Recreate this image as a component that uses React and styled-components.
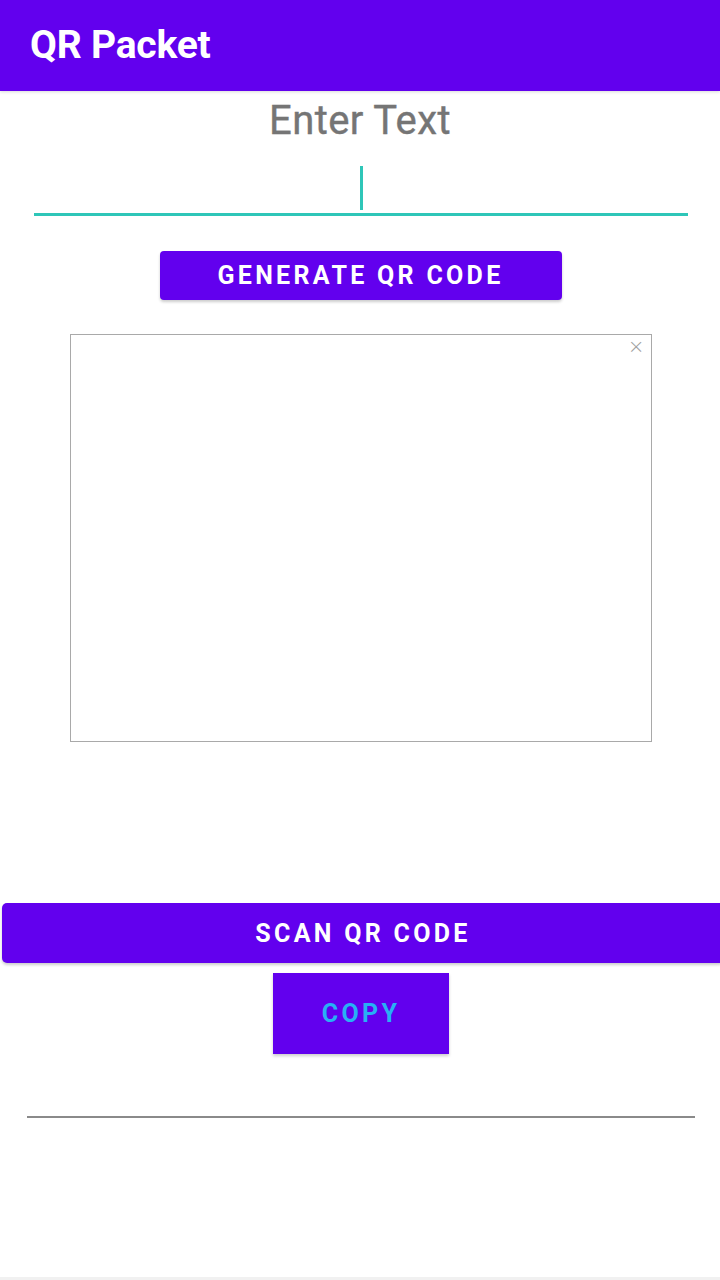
import React from 'react'
import styled, { createGlobalStyle } from 'styled-components'

const Global = createGlobalStyle`
	html, body {
		margin: 0;
		padding: 0;
		background: #fff;
	}
	body {
		font-family: Roboto, 'Noto Sans', sans-serif;
	}
`

const App = () => {
	return (
		<>
			<Global />
			<Screen>
				<AppBar>
					<Title>QR Packet</Title>
				</AppBar>
				<Label>Enter Text</Label>
				<Field>
					<Cursor />
				</Field>
				<GenerateButton>Generate QR Code</GenerateButton>
				<QrFrame>
					<CloseMark>×</CloseMark>
				</QrFrame>
				<ScanButton>Scan QR Code</ScanButton>
				<CopyButton>Copy</CopyButton>
				<Divider />
				<Spacer />
				<NavStrip />
			</Screen>
		</>
	)
}

const Screen = styled.div`
	width: 720px;
	height: 1280px;
	display: flex;
	flex-direction: column;
	overflow: hidden;
	background: #fff;
`
const AppBar = styled.header`
	height: 91px;
	flex-shrink: 0;
	display: flex;
	align-items: center;
	padding: 0 0 0 30px;
	background: #6200ee;
	box-shadow: 0 1px 3px rgba(0, 0, 0, 0.15);
`
const Title = styled.h1`
	margin: 0 0 1px;
	color: #fff;
	font-size: 39px;
	font-weight: 700;
	letter-spacing: -0.2px;
`
const Label = styled.div`
	margin-top: 6px;
	line-height: 48px;
	text-align: center;
	font-size: 40px;
	letter-spacing: 0.4px;
	color: #757575;
	-webkit-text-stroke: 0.4px #757575;
`
const Field = styled.div`
	margin: 21px 32px 0 34px;
	height: 47px;
	display: flex;
	justify-content: center;
	border-bottom: 3px solid #2ec6b8;
`
const Cursor = styled.span`
	width: 3px;
	height: 44px;
	background: #2ec6b8;
`
const Button = styled.button`
	border: none;
	background: #6200ee;
	color: #fff;
	font-family: Roboto, 'Noto Sans', sans-serif;
	font-weight: 700;
	font-size: 25px;
	letter-spacing: 3.3px;
	text-transform: uppercase;
	cursor: pointer;
	box-shadow: 0 2px 3px rgba(0, 0, 0, 0.2);
`
const GenerateButton = styled(Button)`
	align-self: center;
	margin: 35px 0 0 1px;
	width: 402px;
	height: 49px;
	border-radius: 4px;
`
const QrFrame = styled.div`
	align-self: center;
	margin: 34px 0 0 1px;
	box-sizing: border-box;
	width: 582px;
	height: 408px;
	border: 1px solid #a9a9a9;
	display: flex;
	justify-content: flex-end;
	align-items: flex-start;
	padding: 1px 6px 0 0;
`
const CloseMark = styled.span`
	color: #9e9e9e;
	font-size: 20px;
	line-height: 20px;
	font-family: 'DejaVu Sans', sans-serif;
	font-weight: 300;
`
const ScanButton = styled(Button)`
	margin: 161px 0 0 2px;
	width: 722px;
	flex-shrink: 0;
	height: 60px;
	border-radius: 5px;
`
const CopyButton = styled(Button)`
	align-self: center;
	margin: 10px 0 0 2px;
	width: 176px;
	height: 81px;
	color: #28b0f4;
`
const Divider = styled.hr`
	margin: 62px 25px 0 27px;
	border: none;
	height: 2px;
	background: #8a8a8a;
`
const Spacer = styled.div`
	flex: 1;
`
const NavStrip = styled.div`
	height: 3px;
	background: #f1f1f1;
`

export default App
